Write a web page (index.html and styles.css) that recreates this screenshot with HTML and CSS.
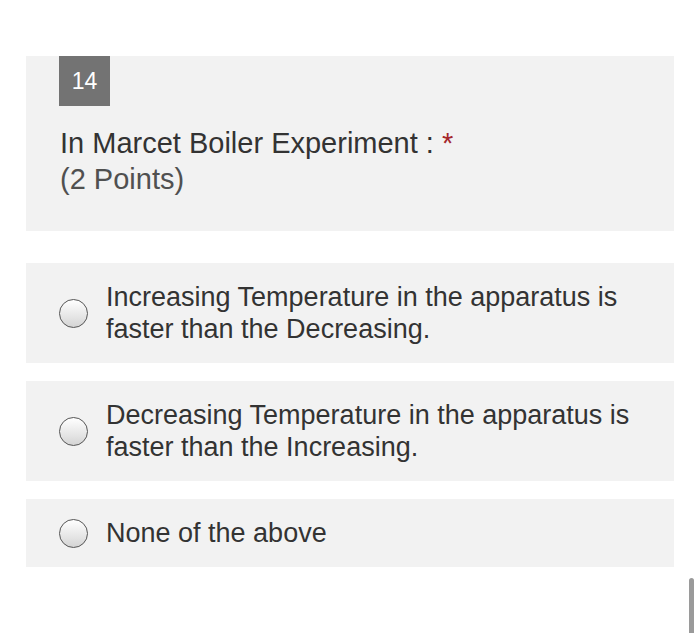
FILE: index.html
```html
<!DOCTYPE html>
<html lang="en">
<head>
<meta charset="utf-8">
<title>Question 14</title>
<link rel="stylesheet" href="styles.css">
</head>
<body>
<main class="page">
  <section class="question">
    <div class="badge">14</div>
    <h2 class="title">In Marcet Boiler Experiment : <span class="req">*</span></h2>
    <div class="points">(2 Points)</div>
  </section>
  <div class="options">
    <label class="option">
      <span class="radio"></span>
      <span class="label">Increasing Temperature in the apparatus is faster than the Decreasing.</span>
    </label>
    <label class="option">
      <span class="radio"></span>
      <span class="label">Decreasing Temperature in the apparatus is faster than the Increasing.</span>
    </label>
    <label class="option">
      <span class="radio"></span>
      <span class="label">None of the above</span>
    </label>
  </div>
</main>
<div class="scroll-indicator"></div>
</body>
</html>
```
FILE: styles.css
```css
html, body {
  margin: 0;
  padding: 0;
  background: #ffffff;
}
body {
  font-family: "Liberation Sans", Arial, Helvetica, sans-serif;
  color: #333333;
  height: 633px;
  overflow: hidden;
  position: relative;
}
.page {
  padding: 56px 26px 0 26px;
}
.question {
  background: #f2f2f2;
  padding: 0 33px 34px 34px;
  margin-bottom: 32px;
}
.badge {
  width: 51px;
  height: 50px;
  margin-left: -1px;
  background: #737373;
  color: #ffffff;
  font-size: 23px;
  display: flex;
  align-items: center;
  justify-content: center;
}
.title {
  margin: 19px 0 0 0;
  font-weight: normal;
  font-size: 29px;
  line-height: 36px;
  color: #333333;
}
.req {
  color: #a4262c;
}
.points {
  font-size: 29px;
  line-height: 36px;
  color: #505050;
}
.options {
  display: flex;
  flex-direction: column;
  gap: 18px;
}
.option {
  background: #f2f2f2;
  display: flex;
  align-items: center;
  gap: 18px;
  padding: 18px 30px 18px 33px;
}
.radio {
  flex: none;
  width: 27px;
  height: 27px;
  border: 1.5px solid #555555;
  border-radius: 50%;
  background: linear-gradient(to bottom, #ffffff 0%, #e6e6e6 60%, #d4d4d4 100%);
}
.label {
  font-size: 27px;
  line-height: 32px;
  color: #333333;
}
.scroll-indicator {
  position: absolute;
  left: 689px;
  top: 578px;
  width: 5px;
  height: 60px;
  border-radius: 3px;
  background: #9a9a9a;
}
```
